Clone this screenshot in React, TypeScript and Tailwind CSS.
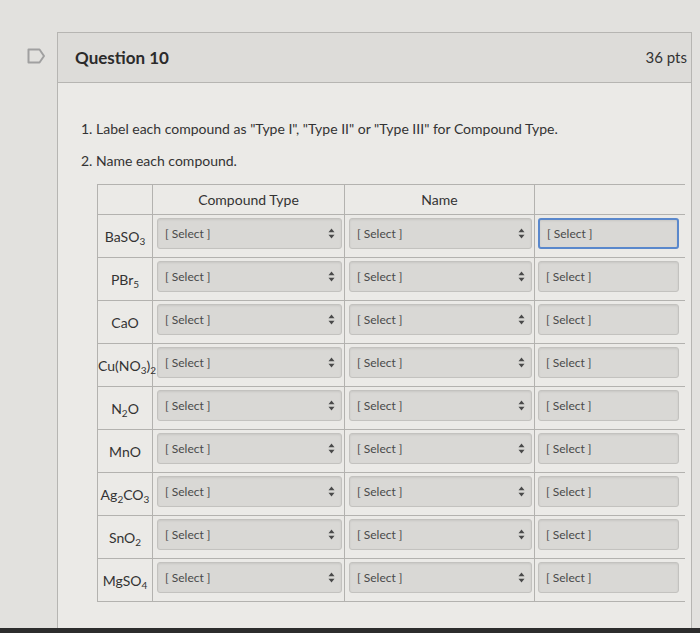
import React from "react";

type Part = { t: string; sub?: boolean };

const compounds: Part[][] = [
  [{ t: "BaSO" }, { t: "3", sub: true }],
  [{ t: "PBr" }, { t: "5", sub: true }],
  [{ t: "CaO" }],
  [{ t: "Cu(NO" }, { t: "3", sub: true }, { t: ")" }, { t: "2", sub: true }],
  [{ t: "N" }, { t: "2", sub: true }, { t: "O" }],
  [{ t: "MnO" }],
  [{ t: "Ag" }, { t: "2", sub: true }, { t: "CO" }, { t: "3", sub: true }],
  [{ t: "SnO" }, { t: "2", sub: true }],
  [{ t: "MgSO" }, { t: "4", sub: true }],
];

function Arrows() {
  return (
    <svg width="7" height="11" viewBox="0 0 7 11">
      <path d="M3.5 0.5 L6.5 4.2 L0.5 4.2 Z" fill="#4a4a4a" />
      <path d="M3.5 10.5 L6.5 6.8 L0.5 6.8 Z" fill="#4a4a4a" />
    </svg>
  );
}

function Select({ arrows = true, focus = false }: { arrows?: boolean; focus?: boolean }) {
  return (
    <div
      className={
        "h-[31px] rounded-[3px] bg-[#d9d8d5] flex items-center justify-between pl-[7px] pr-[6px] text-[12px] text-[#4a4a4a] shadow-[inset_0_1px_2px_rgba(0,0,0,0.08)] " +
        (focus ? "border-2 border-[#5a88cc]" : "border border-[#c3c2bf]")
      }
    >
      <span>[ Select ]</span>
      {arrows && <Arrows />}
    </div>
  );
}

function Flag() {
  return (
    <svg width="19" height="16" viewBox="0 0 19 16">
      <path
        d="M1.5 1.5 H12.5 L17 8 L12.5 14.5 H1.5 Z"
        fill="none"
        stroke="#a0a0a0"
        strokeWidth="2"
        strokeLinejoin="round"
      />
    </svg>
  );
}

export default function App() {
  return (
    <div className="w-[700px] h-[633px] bg-[#e2e1de] flex flex-col overflow-hidden font-['Lato',_'Noto_Sans',_sans-serif] text-[#333]">
      <div className="flex flex-1 min-h-0 pt-[32px]">
        <div className="w-[57px] shrink-0 flex justify-end pr-[11px] pt-[16px]">
          <Flag />
        </div>
        <div className="flex-1 mr-[8px] border-l border-t border-r border-[#b6b5b2] bg-[#ebeae7] flex flex-col">
          <div className="h-[50px] shrink-0 bg-[#dddcd9] border-b border-[#b6b5b2] flex items-center justify-between pl-[17px] pr-[4px]">
            <span className="text-[17px] font-bold text-[#2b2b2b]">Question 10</span>
            <span className="text-[15px] text-[#333]">36 pts</span>
          </div>
          <div className="pl-[23px] pt-[36px]">
            <p className="text-[14px] leading-[20px] text-[#333]">
              1. Label each compound as "Type I", "Type II" or "Type III" for Compound Type.
            </p>
            <p className="mt-[12px] text-[14px] leading-[20px] text-[#333]">2. Name each compound.</p>
            <table className="mt-[13px] ml-[16px] w-[588px] border-collapse table-fixed">
              <colgroup>
                <col className="w-[55px]" />
                <col className="w-[192px]" />
                <col className="w-[190px]" />
                <col />
              </colgroup>
              <thead>
                <tr className="h-[30px]">
                  <th className="border border-[#b3b2af] font-normal"></th>
                  <th className="border border-[#b3b2af] font-normal text-[14px] text-[#333]">Compound Type</th>
                  <th className="border border-[#b3b2af] font-normal text-[14px] text-[#333]">Name</th>
                  <th className="border border-[#b3b2af] border-r-0 font-normal"></th>
                </tr>
              </thead>
              <tbody>
                {compounds.map((parts, i) => (
                  <tr key={i}>
                    <td className="border border-[#b3b2af] text-center text-[14px] text-[#333] p-0 whitespace-nowrap">
                      {parts.map((p, j) =>
                        p.sub ? (
                          <span key={j} className="text-[10px] relative top-[3px]">
                            {p.t}
                          </span>
                        ) : (
                          <span key={j}>{p.t}</span>
                        )
                      )}
                    </td>
                    <td className="border border-[#b3b2af] align-top pt-[3px] pb-[8px] pl-[4px] pr-[2px]">
                      <Select />
                    </td>
                    <td className="border border-[#b3b2af] align-top pt-[3px] pb-[8px] pl-[4px] pr-[2px]">
                      <Select />
                    </td>
                    <td className="border border-[#b3b2af] border-r-0 align-top pt-[3px] pb-[8px] pl-[3px] pr-[6px]">
                      <Select arrows={false} focus={i === 0} />
                    </td>
                  </tr>
                ))}
              </tbody>
            </table>
          </div>
        </div>
      </div>
      <div className="h-[5px] shrink-0 bg-[#2d2d2d]" />
    </div>
  );
}
